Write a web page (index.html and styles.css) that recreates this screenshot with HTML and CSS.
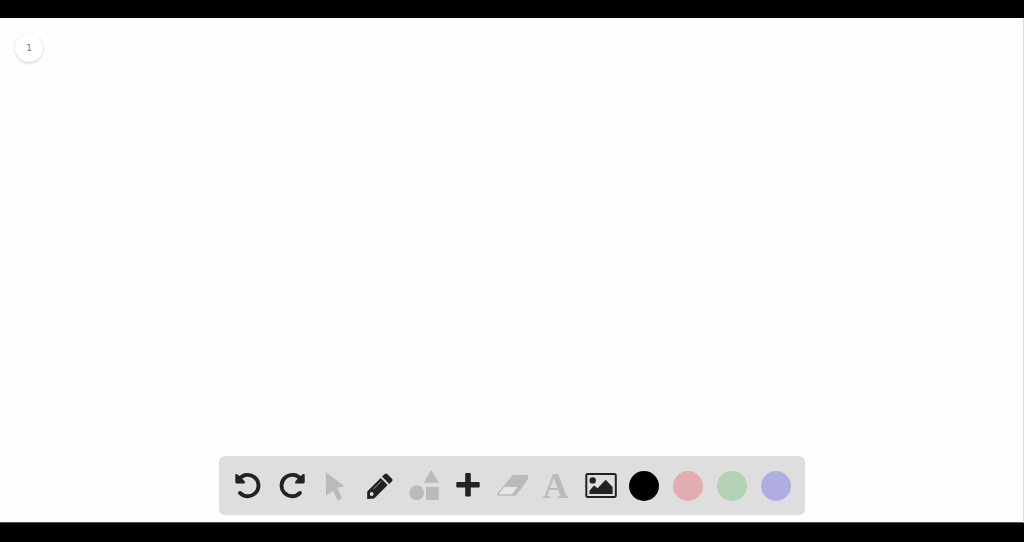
FILE: index.html
```html
<!DOCTYPE html>
<html lang="en">

<head>
    <meta charset="UTF-8">
    <meta name="viewport" content="width=device-width, initial-scale=1.0">
    <title>Whiteboard</title>
    <link rel="stylesheet" href="styles.css">
</head>

<body>
    <main class="board">
        <button class="page-number" type="button">1</button>

        <div class="toolbar">
            <button class="tool" type="button" aria-label="Undo">
                <svg viewBox="0 0 30 30">
                    <path d="M6 8.4A10.7 10.7 0 1 1 7 21.9" fill="none" stroke="currentColor" stroke-width="3.8" stroke-linecap="round" />
                    <path d="M2.3 3.8q.2-1.2 1.4-.8l3.6 2.4 4.5 5.2v1.8H3.2l-.9-.8z" />
                </svg>
            </button>
            <button class="tool" type="button" aria-label="Redo">
                <svg viewBox="0 0 30 30">
                    <path d="M24 8.4A10.7 10.7 0 1 0 23 21.9" fill="none" stroke="currentColor" stroke-width="3.8" stroke-linecap="round" />
                    <path d="M27.7 3.8q-.2-1.2-1.4-.8l-3.6 2.4-4.5 5.2v1.8h8.6l.9-.8z" />
                </svg>
            </button>
            <button class="tool muted" type="button" aria-label="Select">
                <svg viewBox="0 0 30 30">
                    <path d="M4.7.7L23.3 15.6l-6.9 1.2 4.2 9.6q-.3 2.6-4.2 2.6l-4.5-9.3L5 25z" />
                </svg>
            </button>
            <button class="tool" type="button" aria-label="Pencil">
                <svg viewBox="0 0 30 30">
                    <path d="M2.2 20.4L15.7 6.9l7 7L9.2 27.4l-7 .5z" />
                    <path d="M17 5.6l2.8-2.7q1.2-1 2.3 0l4.9 4.9q1.2 1.2 0 2.4l-2.7 2.7z" />
                    <circle cx="6.7" cy="23" r="1.9" fill="#dedede" />
                    <path d="M8.2 18.3l8-8" stroke="#9a9a9a" stroke-width="1" />
                </svg>
            </button>
            <button class="tool muted" type="button" aria-label="Shapes">
                <svg viewBox="0 0 30 30">
                    <path d="M22.3-1L30 11.7H14.7z" />
                    <circle cx="7.7" cy="21.7" r="7.4" />
                    <path d="M17 16h12.7v13H17z" />
                </svg>
            </button>
            <button class="tool" type="button" aria-label="Add">
                <svg viewBox="0 0 30 30">
                    <rect x="12.2" y="2" width="5.6" height="23.4" rx="1" />
                    <rect x="3.3" y="11" width="23.4" height="5.6" rx="1" />
                </svg>
            </button>
            <button class="tool muted" type="button" aria-label="Eraser">
                <svg viewBox="0 0 30 30">
                    <path d="M15.6 4H31v4L20 23.2q-1 1.5-3 1.5H1q-1.5-.5-.5-2.5z" />
                    <path d="M7 16h13.3l-4.6 6.4q-.6.9-1.8.9H1.7z" fill="#e6e6e6" />
                </svg>
            </button>
            <button class="tool muted letter" type="button">A</button>
            <button class="tool" type="button" aria-label="Image">
                <svg viewBox="0 0 30 30">
                    <rect x="1.3" y="3" width="29.5" height="23" rx="1.5" fill="none" stroke="currentColor" stroke-width="2" />
                    <circle cx="7.7" cy="9.4" r="3.2" />
                    <path d="M4.5 23v-3.2L9 14.6l3.6 2.6 8.1-8.4 6.9 7.2v7z" />
                </svg>
            </button>
            <button class="tool color black" type="button" aria-label="Black"></button>
            <button class="tool color red" type="button" aria-label="Red"></button>
            <button class="tool color green" type="button" aria-label="Green"></button>
            <button class="tool color blue" type="button" aria-label="Blue"></button>
        </div>
    </main>
</body>

</html>
```
FILE: styles.css
```css
* {
    box-sizing: border-box;
}

body {
    margin: 0;
    min-height: 100vh;
    padding: 18px 0 19px;
    display: flex;
    background-color: #000;
    font-family: "Liberation Sans", Arial, sans-serif;
}

.board {
    flex: 1;
    display: flex;
    flex-direction: column;
    justify-content: space-between;
    padding: 16px 15px 7px;
    background-color: #fefefe;
    border-right: 1px solid #dedede;
    border-bottom: 1px solid #555;
}

button {
    padding: 0;
    border: none;
    cursor: pointer;
}

.page-number {
    width: 28px;
    height: 28px;
    border-radius: 50%;
    background-color: #fff;
    box-shadow: 0 1px 3px rgba(60, 70, 130, 0.25);
    color: #5c649c;
    font-family: "DejaVu Sans", sans-serif;
    font-size: 8px;
}

.toolbar {
    align-self: center;
    display: flex;
    flex-wrap: wrap;
    gap: 14px;
    padding: 15px 14px 14px;
    border-radius: 6px;
    background-color: #dedede;
}

.tool {
    width: 30px;
    height: 30px;
    background: none;
    color: #202224;
}

.tool svg {
    display: block;
    width: 30px;
    height: 30px;
    overflow: visible;
    fill: currentColor;
}

.muted {
    color: #b9bbba;
}

.letter {
    font-family: "Liberation Serif", serif;
    font-size: 36px;
    font-weight: bold;
    line-height: 30px;
}

.color {
    border-radius: 50%;
}

.black {
    background-color: #000;
}

.red {
    background-color: #e1adb1;
}

.green {
    background-color: #b3d1b3;
}

.blue {
    background-color: #b0ade0;
}
```
